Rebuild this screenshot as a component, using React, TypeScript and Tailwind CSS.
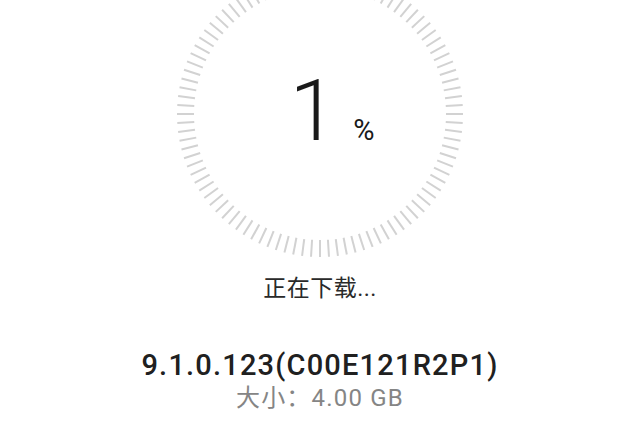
import React from "react";

const ticks = Array.from({ length: 100 }, (_, i) => i);

function Dial() {
  const cx = 150;
  const cy = 114;
  const rOuter = 143;
  const rInner = 126;
  return (
    <svg width="300" height="264" viewBox="0 0 300 264" className="block">
      {ticks.map((i) => {
        const a = (i / 100) * Math.PI * 2;
        const s = Math.sin(a);
        const c = Math.cos(a);
        return (
          <line
            key={i}
            x1={cx + s * rInner}
            y1={cy - c * rInner}
            x2={cx + s * rOuter}
            y2={cy - c * rOuter}
            stroke="#d2d2d2"
            strokeWidth="2"
          />
        );
      })}
    </svg>
  );
}

export default function App() {
  return (
    <div
      className="w-[640px] h-[427px] bg-white overflow-hidden flex flex-col items-center"
      style={{ fontFamily: "Roboto, 'Noto Sans CJK SC', sans-serif" }}
    >
      <div className="relative w-[300px] h-[264px]">
        <Dial />
        <div className="absolute left-0 right-0 top-[68px] flex items-baseline justify-center pl-[24px]">
          <span className="text-[86px] leading-none font-light text-[#1a1a1a]">1</span>
          <span className="text-[29px] leading-none text-[#1a1a1a] ml-[16px]">%</span>
        </div>
      </div>
      <div className="mt-[10px] text-[23px] leading-[30px] tracking-[0.5px] text-[#2a2a2a]">正在下载...</div>
      <div className="mt-[44px] text-[29px] leading-[34px] font-medium tracking-[1.2px] text-[#202020]">
        9.1.0.123(C00E121R2P1)
      </div>
      <div className="mt-[1px] text-[24px] leading-[30px] tracking-[1.2px] text-[#858585]">大小：4.00 GB</div>
    </div>
  );
}
